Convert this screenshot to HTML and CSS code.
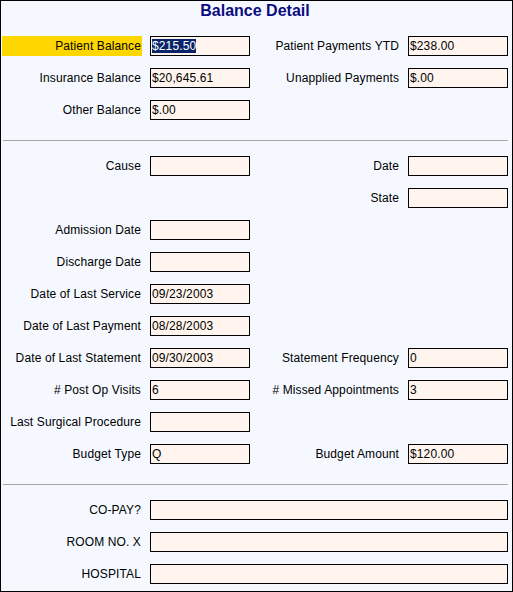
FILE: index.html
```html
<!DOCTYPE html>
<html>
<head>
<meta charset="utf-8">
<link rel="stylesheet" href="styles.css">
</head>
<body>
<div class="panel">
  <div class="title">Balance Detail</div>

  <div class="grid sec-first">
    <div class="label current">Patient Balance</div>
    <div class="field"><span class="sel">$215.50</span></div>
    <div class="label">Patient Payments YTD</div>
    <div class="field">$238.00</div>

    <div class="label">Insurance Balance</div>
    <div class="field">$20,645.61</div>
    <div class="label">Unapplied Payments</div>
    <div class="field">$.00</div>

    <div class="label">Other Balance</div>
    <div class="field">$.00</div>
    <div class="empty"></div>
    <div class="empty"></div>
  </div>

  <div class="rule"></div>

  <div class="grid">
    <div class="label">Cause</div>
    <div class="field"></div>
    <div class="label">Date</div>
    <div class="field"></div>

    <div class="empty"></div>
    <div class="empty"></div>
    <div class="label">State</div>
    <div class="field"></div>

    <div class="label">Admission Date</div>
    <div class="field"></div>
    <div class="empty"></div>
    <div class="empty"></div>

    <div class="label">Discharge Date</div>
    <div class="field"></div>
    <div class="empty"></div>
    <div class="empty"></div>

    <div class="label">Date of Last Service</div>
    <div class="field">09/23/2003</div>
    <div class="empty"></div>
    <div class="empty"></div>

    <div class="label">Date of Last Payment</div>
    <div class="field">08/28/2003</div>
    <div class="empty"></div>
    <div class="empty"></div>

    <div class="label">Date of Last Statement</div>
    <div class="field">09/30/2003</div>
    <div class="label">Statement Frequency</div>
    <div class="field">0</div>

    <div class="label"># Post Op Visits</div>
    <div class="field">6</div>
    <div class="label"># Missed Appointments</div>
    <div class="field">3</div>

    <div class="label">Last Surgical Procedure</div>
    <div class="field"></div>
    <div class="empty"></div>
    <div class="empty"></div>

    <div class="label">Budget Type</div>
    <div class="field">Q</div>
    <div class="label">Budget Amount</div>
    <div class="field">$120.00</div>
  </div>

  <div class="rule"></div>

  <div class="grid">
    <div class="label">CO-PAY?</div>
    <div class="field wide"></div>

    <div class="label">ROOM NO. X</div>
    <div class="field wide"></div>

    <div class="label">HOSPITAL</div>
    <div class="field wide"></div>
  </div>
</div>
</body>
</html>
```

FILE: styles.css
```css
html, body {
  margin: 0;
  padding: 0;
  background: #f5f9ff;
}

.panel {
  box-sizing: border-box;
  width: 513px;
  height: 592px;
  border: 1px solid #000;
  padding: 0 4px 7px 1px;
  background: #f5f9ff;
  font-family: "Liberation Sans", Arial, sans-serif;
  font-size: 12px;
  color: #000;
}

.title {
  height: 19px;
  line-height: 19px;
  text-align: center;
  font-size: 16px;
  font-weight: bold;
  color: #0c0c80;
}

.grid {
  display: grid;
  grid-template-columns: 140px 100px 142px 100px;
  grid-auto-rows: 20px;
  column-gap: 8px;
  row-gap: 12px;
  margin-top: 15px;
  letter-spacing: 0.12px;
}

.grid.sec-first {
  margin-top: 16px;
}

.label {
  display: flex;
  align-items: center;
  justify-content: flex-end;
  padding-right: 1px;
  white-space: nowrap;
}

.label.current {
  background: #ffd700;
}

.field {
  box-sizing: border-box;
  height: 20px;
  border: 1px solid #000;
  background: #fff5ee;
  padding: 0 2px 0 1px;
  display: flex;
  align-items: center;
  white-space: nowrap;
}

.field.wide {
  grid-column: 2 / 5;
}

.sel {
  background: #0a246a;
  color: #fff;
  line-height: 14px;
}

.rule {
  height: 1px;
  background: #a6a6a6;
  margin-top: 20px;
  margin-left: 1px;
}
```
